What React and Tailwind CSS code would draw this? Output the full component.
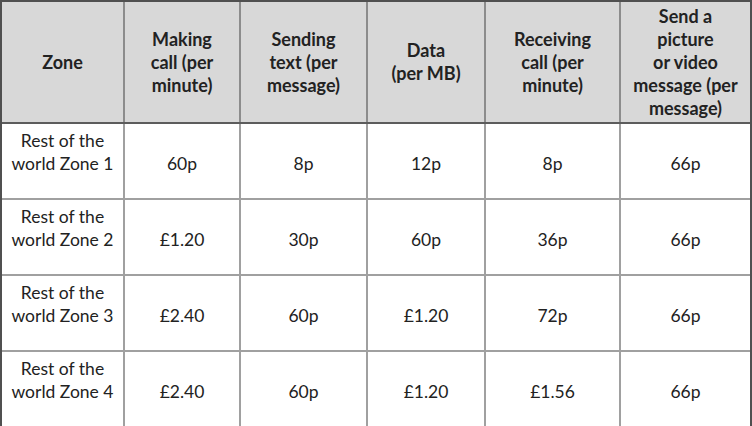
const headers = [
  ["Zone"],
  ["Making", "call (per", "minute)"],
  ["Sending", "text (per", "message)"],
  ["Data", "(per MB)"],
  ["Receiving", "call (per", "minute)"],
  ["Send a", "picture", "or video", "message (per", "message)"],
];

const rows = [
  ["1", "60p", "8p", "12p", "8p", "66p"],
  ["2", "£1.20", "30p", "60p", "36p", "66p"],
  ["3", "£2.40", "60p", "£1.20", "72p", "66p"],
  ["4", "£2.40", "60p", "£1.20", "£1.56", "66p"],
];

const widths = ["w-[122px]", "w-[116px]", "w-[127px]", "w-[118px]", "w-[135px]", "w-auto"];

export default function App() {
  return (
    <div className="w-[752px] bg-white font-['Lato',sans-serif] text-[#222]">
      <div className="border-2 border-[#505050]">
        <table className="w-full table-fixed border-collapse border-hidden">
          <colgroup>
            {widths.map((w, i) => (
              <col key={i} className={w} />
            ))}
          </colgroup>
          <thead>
            <tr className="h-[121px] bg-[#d8d8d8]">
              {headers.map((lines, i) => (
                <th
                  key={i}
                  className="border-2 border-[#8c8c8c] border-b-[#5c5c5c] px-1 text-center align-middle text-[18px] font-bold leading-[23px] whitespace-nowrap"
                >
                  {lines.map((l, j) => (
                    <div key={j}>{l}</div>
                  ))}
                </th>
              ))}
            </tr>
          </thead>
          <tbody>
            {rows.map((r, ri) => (
              <tr key={ri} className="h-[76px]">
                {r.map((c, ci) =>
                  ci === 0 ? (
                    <td
                      key={ci}
                      className="border-2 border-[#a0a0a0] px-1 pt-[5px] text-center align-top text-[17.5px] leading-[23px] whitespace-nowrap"
                    >
                      <div>Rest of the</div>
                      <div>world Zone {c}</div>
                    </td>
                  ) : (
                    <td
                      key={ci}
                      className="border-2 border-[#a0a0a0] px-1 pt-[28px] text-center align-top text-[17.5px] leading-[23px]"
                    >
                      {c}
                    </td>
                  )
                )}
              </tr>
            ))}
          </tbody>
        </table>
      </div>
    </div>
  );
}
